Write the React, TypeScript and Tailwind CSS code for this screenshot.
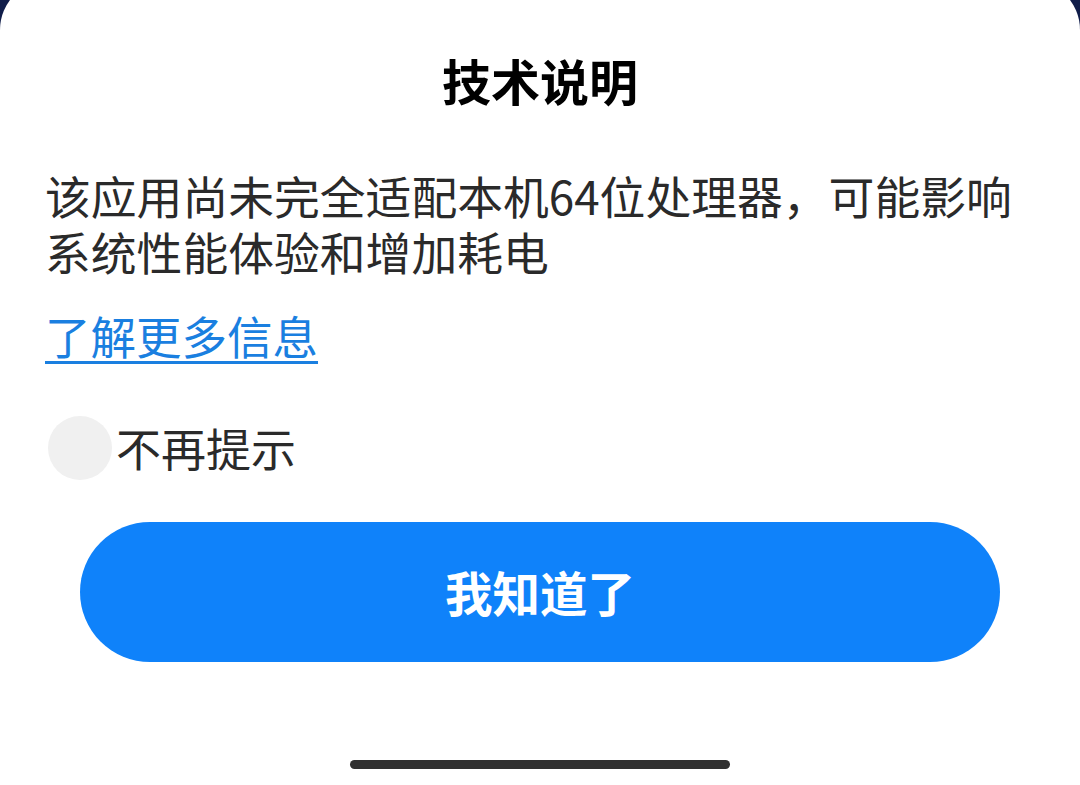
import React from "react";

export default function App() {
  const font = { fontFamily: '"Noto Sans CJK SC", "Noto Sans", sans-serif' };
  return (
    <div className="w-[1080px] h-[785px] overflow-hidden bg-[#101d4a]" style={font}>
      <div className="-mt-[20px] h-[805px] bg-white rounded-t-[50px] flex flex-col pt-[72px]">
        <h1 className="text-center text-[49px] leading-[56px] font-bold text-black">技术说明</h1>
        <div className="mt-[59px] px-[45px]">
          <p className="text-[45.8px] leading-[56px] text-[#2a2a2a]">
            <span className="block">该应用尚未完全适配本机64位处理器，可能影响</span>
            <span className="block">系统性能体验和增加耗电</span>
          </p>
          <a className="mt-[28px] block text-[45.5px] leading-[56px] text-[#1a7fe0] underline decoration-[3px] underline-offset-[6px] w-fit">
            了解更多信息
          </a>
          <div className="mt-[53px] flex items-center h-[64px] ml-[3px]">
            <div className="w-[64px] h-[64px] rounded-full bg-[#f0f0f0]" />
            <span className="ml-[4px] text-[45px] leading-[56px] text-[#2a2a2a]">不再提示</span>
          </div>
        </div>
        <div className="mt-[42px] px-[80px]">
          <button className="w-full h-[140px] rounded-full bg-[#0f82fa] text-white text-[47.5px] font-bold leading-[56px]">
            我知道了
          </button>
        </div>
        <div className="mt-[98px] flex justify-center">
          <div className="w-[380px] h-[9px] rounded-full bg-[#303030]" />
        </div>
      </div>
    </div>
  );
}
